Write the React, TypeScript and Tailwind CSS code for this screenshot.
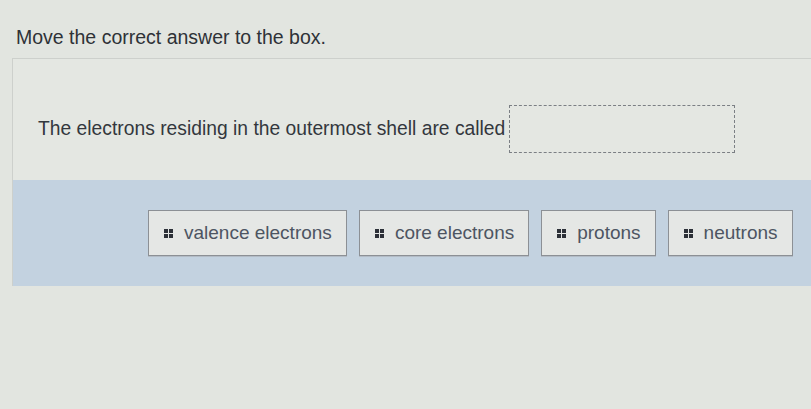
import React from "react";

const choices = ["valence electrons", "core electrons", "protons", "neutrons"];

// four-dot drag handle shown on each answer tile
const Grip = () => (
  <span className="grid grid-cols-2 gap-[1px] shrink-0">
    <span className="w-[4px] h-[4px] bg-[#2c3038]" />
    <span className="w-[4px] h-[4px] bg-[#2c3038]" />
    <span className="w-[4px] h-[4px] bg-[#2c3038]" />
    <span className="w-[4px] h-[4px] bg-[#2c3038]" />
  </span>
);

const Choice = ({ label }: { label: string }) => (
  <button
    type="button"
    className="h-[46px] flex items-center gap-[11px] pl-[15px] pr-[14px] bg-[#e5e7e5] border border-[#8c9095] text-[19px] text-[#4d5562] shadow-[0_1px_0_#b3bcc6]"
  >
    <Grip />
    <span>{label}</span>
  </button>
);

export default function App() {
  return (
    <div
      className="w-[811px] h-[409px] overflow-hidden bg-[#e2e5e0] text-[#2e3237]"
      style={{ fontFamily: '"Liberation Sans", Arial, sans-serif' }}
    >
      <h1 className="pl-[16px] pt-[24px] text-[19.5px] leading-[26px]">
        Move the correct answer to the box.
      </h1>

      <div className="ml-[12px] mt-[8px] border-t border-l border-[#cdd0cc] bg-[#e4e7e2]">
        <div className="flex items-center pl-[25px] pt-[46px] pb-[27px]">
          <span className="text-[19.3px] text-[#33373d]">
            The electrons residing in the outermost shell are called
          </span>
          <div className="ml-[4px] w-[226px] h-[48px] border border-dashed border-[#7b7f84]" />
        </div>

        <div className="h-[106px] flex items-center gap-[12px] pl-[135px] bg-[#c3d2e0]">
          {choices.map((c) => (
            <Choice key={c} label={c} />
          ))}
        </div>
      </div>
    </div>
  );
}
